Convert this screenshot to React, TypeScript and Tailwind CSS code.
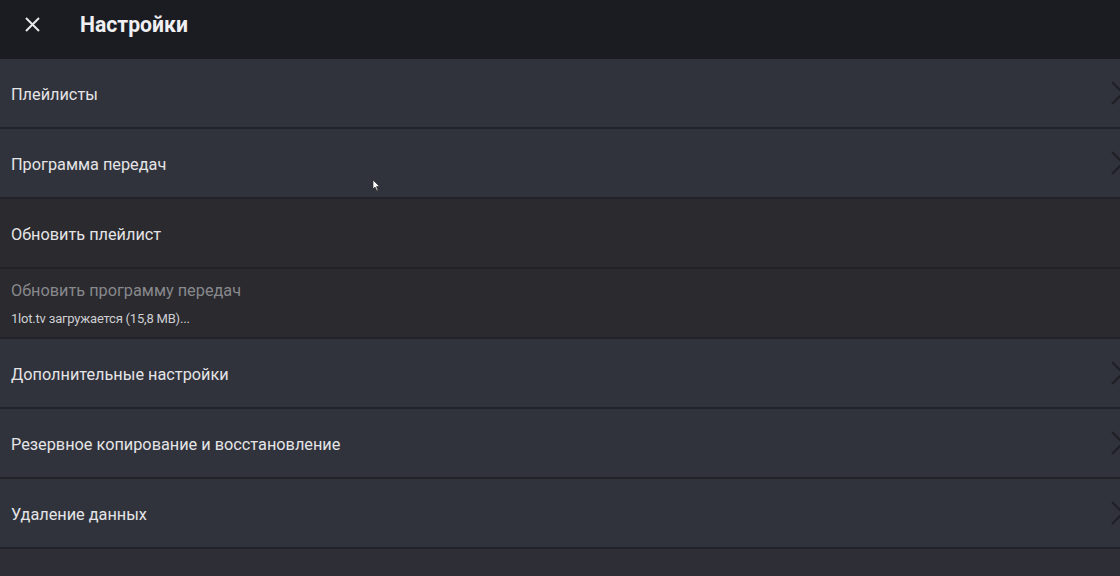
import React from "react";

type Row = { title: string; sub?: string; dim?: boolean; dark?: boolean; chevron?: boolean };

const rows: Row[] = [
  { title: "Плейлисты", chevron: true },
  { title: "Программа передач", chevron: true },
  { title: "Обновить плейлист", dark: true },
  { title: "Обновить программу передач", sub: "1lot.tv загружается (15,8 MB)...", dim: true, dark: true },
  { title: "Дополнительные настройки", chevron: true },
  { title: "Резервное копирование и восстановление", chevron: true },
  { title: "Удаление данных", chevron: true },
];

function Chevron() {
  return (
    <svg className="absolute right-[-10px] top-1/2 -translate-y-1/2" width="20" height="24" viewBox="0 0 20 24">
      <path d="M2 1 L13 12 L2 23" fill="none" stroke="#1f2026" strokeWidth="2" />
    </svg>
  );
}

export default function App() {
  return (
    <div
      className="relative w-[1120px] h-[576px] overflow-hidden bg-[#2d2e36] text-[#e4e4e6]"
      style={{ fontFamily: "Roboto, 'Noto Sans', sans-serif" }}
    >
      <div className="h-[59px] bg-[#1b1c22] flex items-center pb-[10px]">
        <svg className="ml-[25px]" width="15" height="15" viewBox="0 0 15 15">
          <path d="M1 1 L14 14 M14 1 L1 14" stroke="#e8e8ea" strokeWidth="2" />
        </svg>
        <span className="ml-[40px] text-[21.2px] leading-[26px] font-bold text-[#f0f0f2]">Настройки</span>
      </div>
      {rows.map((r, i) => (
        <div key={i} className="border-b-2 border-[#222329]">
          <div
            className={`relative h-[68px] flex flex-col justify-center px-[11px] ${
              r.dark ? "bg-[#2a2a2f]" : "bg-[#31333c]"
            }`}
          >
            {r.sub ? (
              <>
                <div className="text-[16.3px] leading-[20px] text-[#88888c] mt-[1px]">{r.title}</div>
                <div className="text-[13px] leading-[16px] text-[#cfcfd2] mt-[10px] tracking-[-0.2px]">{r.sub}</div>
              </>
            ) : (
              <div className="text-[16.3px] leading-[20px] mt-[3px]">{r.title}</div>
            )}
            {r.chevron && <Chevron />}
          </div>
        </div>
      ))}
      <svg className="absolute left-[372px] top-[179px]" width="9" height="13" viewBox="0 0 9 13">
        <path d="M1 1 L1 10 L3 8 L5 12 L6 11.5 L4.5 7.5 L7.5 7.5 Z" fill="#ffffff" stroke="#222" strokeWidth="0.6" />
      </svg>
    </div>
  );
}
